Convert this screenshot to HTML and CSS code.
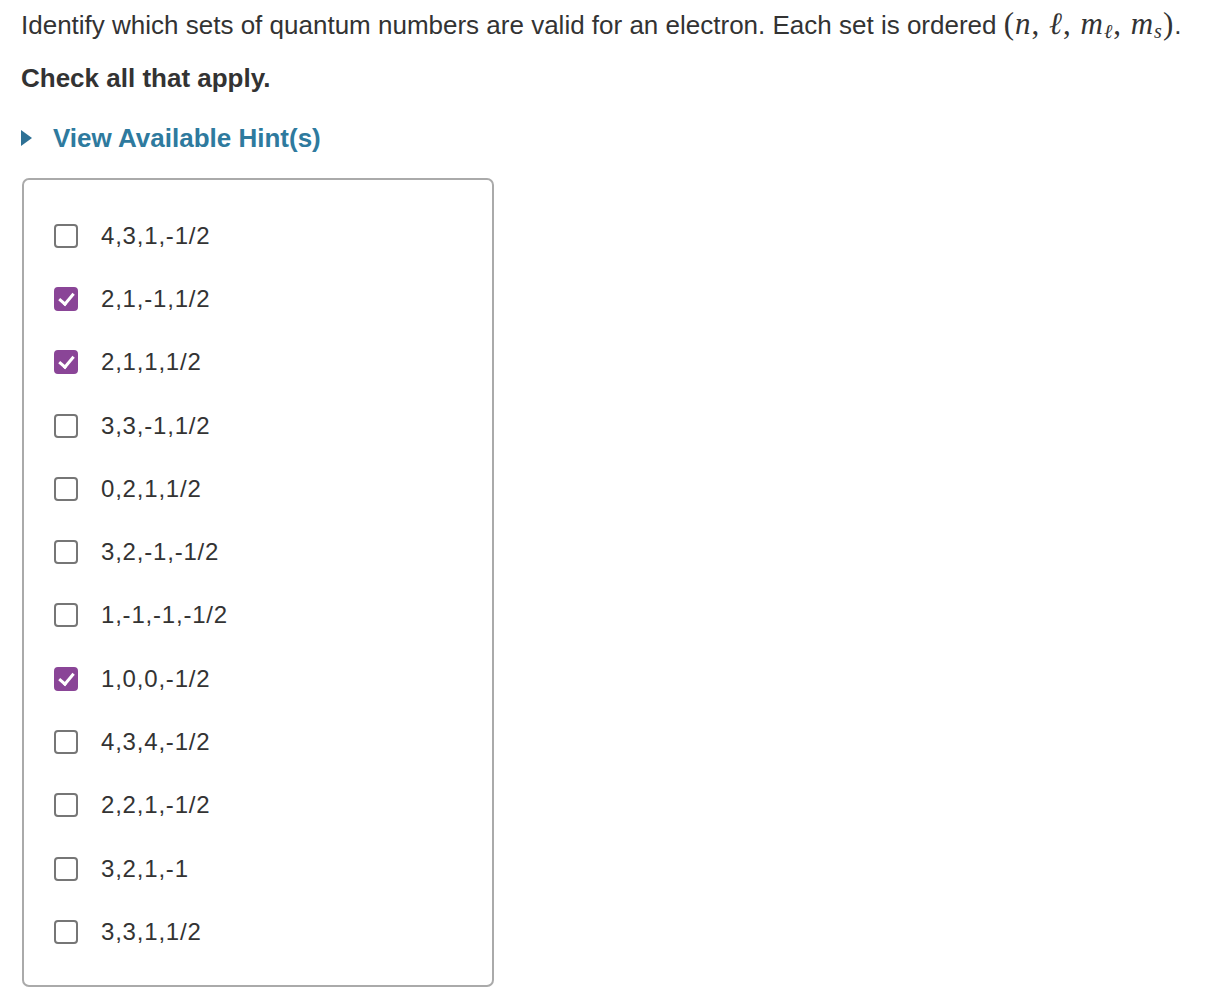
FILE: index.html
```html
<!DOCTYPE html>
<html lang="en">
<head>
  <meta charset="UTF-8" />
  <title>Quantum Numbers</title>
  <link rel="stylesheet" href="styles.css">
</head>
<body>

  <!-- Question -->
  <p class="prompt">
    Identify which sets of quantum numbers are valid for an electron. Each set is ordered
    <span class="math">(<i>n</i>, <i>ℓ</i>, <i>m</i><sub><i>ℓ</i></sub>, <i>m</i><sub><i>s</i></sub>)</span>.
  </p>
  <p class="instruction">Check all that apply.</p>

  <div class="hint-toggle">
    <span class="caret"></span>
    <span class="hint-text">View Available Hint(s)</span>
  </div>

  <!-- Answer choices -->
  <div class="choices">
    <label class="choice"><span class="box"></span>4,3,1,-1/2</label>
    <label class="choice"><span class="box checked"></span>2,1,-1,1/2</label>
    <label class="choice"><span class="box checked"></span>2,1,1,1/2</label>
    <label class="choice"><span class="box"></span>3,3,-1,1/2</label>
    <label class="choice"><span class="box"></span>0,2,1,1/2</label>
    <label class="choice"><span class="box"></span>3,2,-1,-1/2</label>
    <label class="choice"><span class="box"></span>1,-1,-1,-1/2</label>
    <label class="choice"><span class="box checked"></span>1,0,0,-1/2</label>
    <label class="choice"><span class="box"></span>4,3,4,-1/2</label>
    <label class="choice"><span class="box"></span>2,2,1,-1/2</label>
    <label class="choice"><span class="box"></span>3,2,1,-1</label>
    <label class="choice"><span class="box"></span>3,3,1,1/2</label>
  </div>

</body>
</html>
```

FILE: styles.css
```css
body {
  font-family: "Liberation Sans", Arial, sans-serif;
  color: #333;
  background: #fff;
  margin: 0;
  padding: 6px 21px 0 21px;
}

.prompt {
  margin: 0;
  font-size: 26px;
  line-height: 36px;
}

.math {
  font-family: "Liberation Serif", "DejaVu Serif", serif;
  font-size: 31px;
  letter-spacing: 1px;
}

.math sub {
  font-size: 20px;
  vertical-align: -4px;
  line-height: 0;
}

.instruction {
  margin: 17px 0 0 0;
  font-size: 26px;
  line-height: 36px;
  font-weight: bold;
}

.hint-toggle {
  display: flex;
  align-items: center;
  margin-top: 24px;
  height: 36px;
  color: #2e7a9e;
  font-size: 26px;
  font-weight: bold;
}

.caret {
  width: 0;
  height: 0;
  border-top: 8px solid transparent;
  border-bottom: 8px solid transparent;
  border-left: 11px solid #2e7195;
  margin: 0 21px 0 0;
}

.choices {
  width: 468px;
  margin: 22px 0 0 1px;
  border: 2px solid #aaa;
  border-radius: 7px;
  padding: 24px 0 21px 0;
}

.choice {
  display: flex;
  align-items: center;
  height: 63.3px;
  padding-left: 30px;
  font-size: 24px;
  letter-spacing: 0.8px;
  color: #333;
}

.box {
  width: 20px;
  height: 20px;
  border: 2px solid #767676;
  border-radius: 4px;
  margin-right: 23px;
  flex-shrink: 0;
}

.box.checked {
  background: #8a4597;
  border-color: #8a4597;
  position: relative;
}

.box.checked::after {
  content: "";
  position: absolute;
  left: 6px;
  top: 1px;
  width: 6px;
  height: 12px;
  border: solid #fff;
  border-width: 0 3.5px 3.5px 0;
  transform: rotate(40deg);
}
```
